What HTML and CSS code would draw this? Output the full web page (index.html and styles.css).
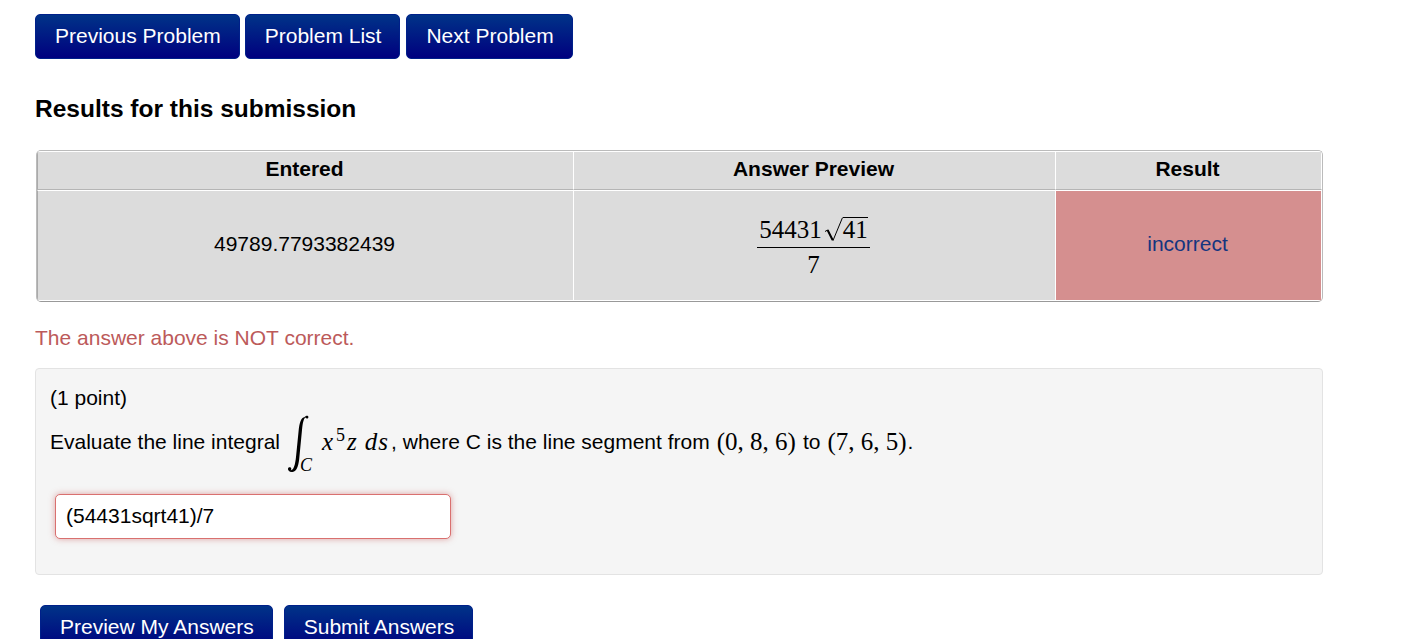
FILE: index.html
```html
<!DOCTYPE html>
<html lang="en">
<head>
 <meta charset="UTF-8">
 <meta name="viewport" content="width=device-width, initial-scale=1.0">
 <title>Problem</title>
 <link rel="stylesheet" href="styles.css">
</head>
<body>
 <div class="page">
   <div class="nav-buttons">
     <a class="btn">Previous Problem</a>
     <a class="btn">Problem List</a>
     <a class="btn">Next Problem</a>
   </div>

   <h2 class="results-title">Results for this submission</h2>

   <table class="results">
     <tr>
       <th class="col-entered">Entered</th>
       <th class="col-preview">Answer Preview</th>
       <th class="col-result">Result</th>
     </tr>
     <tr class="answer-row">
       <td>49789.7793382439</td>
       <td>
         <span class="frac">
           <span class="frac-top">
             <span class="num">54431</span>
             <svg class="sqrt-sign" width="21" height="25" viewBox="0 0 21 25"><path d="M3 14.5 L5.6 13 L11 23.5 L20.5 0.6" fill="none" stroke="#000" stroke-width="1"/><path d="M5.6 13 L10.6 23" fill="none" stroke="#000" stroke-width="2"/></svg>
             <span class="radicand">41</span>
           </span>
           <span class="frac-bottom">7</span>
         </span>
       </td>
       <td class="incorrect">incorrect</td>
     </tr>
   </table>

   <p class="wrong-msg">The answer above is NOT correct.</p>

   <div class="problem">
     <p class="points">(1 point)</p>
     <div class="statement">
       <span>Evaluate the line integral</span>
       <span class="integral">
         <svg width="22" height="60" viewBox="0 0 22 60"><path d="M17.5 3.2 C18.8 1.2 21.6 1.2 21.4 3.2 C21.2 5 19 4.8 18.6 3.6 C16.6 4.4 15.8 9 15 16 L12.4 43 C11.8 50 10.4 57.5 5.4 58 C2.4 58.3 0.6 56.4 1 54.6 C1.5 52.8 4 53 4.3 54.8 C4.4 55.6 4 56 3.6 56.3 C6.4 56.6 8.2 51 9 43 L11.6 17 C12.4 9 14 3.4 17.5 3.2 Z" fill="#000"/></svg>
         <i class="sub-c">C</i>
       </span>
       <span class="math"><i class="var-x">x</i><sup>5</sup><i class="var-z">z</i><i class="ds">ds</i></span>
       <span>, where C is the line segment from</span>
       <span class="math-big">(0, 8, 6)</span>
       <span>to</span>
       <span class="math-big">(7, 6, 5)</span>
       <span class="period">.</span>
     </div>
     <input class="answer-input" type="text" value="(54431sqrt41)/7">
   </div>

   <div class="form-buttons">
     <a class="btn">Preview My Answers</a>
     <a class="btn">Submit Answers</a>
   </div>
 </div>
</body>
</html>
```

FILE: styles.css
```css
html, body {
margin: 0;
height: 100%;
overflow: hidden;
}
body {
font-family: "Liberation Sans", Arial, sans-serif;
font-size: 21px;
color: #000;
background: #fff;
}
.page {
width: 1288px;
padding: 14px 0 0 35px;
}
.nav-buttons {
display: flex;
gap: 5px;
}
.nav-buttons .btn:last-child {
margin-left: 1px;
}
.btn {
display: block;
padding: 0 18px 0 19px;
height: 45px;
line-height: 41px;
box-sizing: border-box;
color: #fff;
border: 1px solid #00208a;
border-radius: 5px;
background: linear-gradient(to bottom, #003388, #00007f);
}
.results-title {
margin: 35px 0 0;
font-size: 24.5px;
line-height: 30px;
font-weight: bold;
}
.results {
margin: 26px 0 0 1px;
width: 1287px;
table-layout: fixed;
border-collapse: separate;
border-spacing: 0;
border: 1px solid #bbb;
border-bottom-color: #999;
border-radius: 5px;
overflow: hidden;
background: #dcdcdc;
}
.results th, .results td {
background: #dcdcdc;
text-align: center;
padding: 0 2px 0 0;
border-left: 1px solid #fff;
border-top: 1px solid #fff;
}
.results th {
height: 34px;
padding-bottom: 3px;
border-bottom: 1px solid #b5b5b5;
font-size: 21px;
}
.results td {
height: 105px;
padding-bottom: 4px;
border-bottom: 1px solid #fff;
}
.results th:first-child, .results td:first-child {
border-left: 1px solid #aaa;
}
.results th:last-child, .results td:last-child {
border-right: 1px solid #fff;
}
.col-entered {
width: 533px;
}
.col-preview {
width: 479px;
}
.results .incorrect {
background: #d58f8f;
color: #13357f;
}
.frac {
display: inline-block;
vertical-align: middle;
margin-top: 11px;
font-family: "Liberation Serif", serif;
font-size: 25px;
}
.frac-top {
display: flex;
align-items: flex-end;
height: 30px;
padding: 0 2px;
border-bottom: 1px solid #000;
}
.num {
line-height: 28px;
margin-bottom: 3px;
}
.sqrt-sign {
display: block;
margin-bottom: 5px;
}
.radicand {
border-top: 1px solid #000;
height: 24px;
line-height: 24px;
margin-bottom: 5px;
}
.frac-bottom {
display: block;
line-height: 33px;
}
.wrong-msg {
margin: 23px 0 0;
line-height: 26px;
color: #bc5a5a;
}
.problem {
margin-top: 17px;
height: 207px;
box-sizing: border-box;
padding: 16px 14px 0;
background: #f5f5f5;
border: 1px solid #e3e3e3;
border-radius: 4px;
}
.points {
margin: 0;
line-height: 26px;
}
.statement {
display: flex;
align-items: center;
white-space: nowrap;
height: 56px;
margin-top: 3px;
}
.integral {
position: relative;
align-self: flex-start;
flex: none;
width: 35px;
height: 60px;
margin-left: 7px;
}
.integral svg {
display: block;
}
.sub-c {
position: absolute;
left: 13px;
top: 41px;
font-family: "Liberation Serif", serif;
font-size: 18px;
line-height: 20px;
}
.math {
font-family: "Liberation Serif", serif;
font-size: 25px;
margin-right: 2px;
}
.math sup {
font-size: 18px;
line-height: 0;
}
.var-x {
margin-right: 3px;
}
.var-z {
margin-left: 2px;
}
.ds {
margin-left: 8px;
letter-spacing: 1px;
}
.math-big {
font-family: "Liberation Serif", serif;
font-size: 25px;
margin: 0 7px;
}
.period {
margin-left: -6px;
}
.answer-input {
display: block;
margin: 24px 0 0 5px;
width: 396px;
height: 45px;
box-sizing: border-box;
padding: 0 10px 2px;
font-family: "Liberation Sans", Arial, sans-serif;
font-size: 21px;
color: #000;
background: #fff;
border: 1px solid #d9706f;
border-radius: 5px;
box-shadow: 0 0 6px rgba(200, 80, 80, 0.5);
outline: none;
}
.form-buttons {
display: flex;
gap: 11px;
margin: 30px 0 0 5px;
}
```
